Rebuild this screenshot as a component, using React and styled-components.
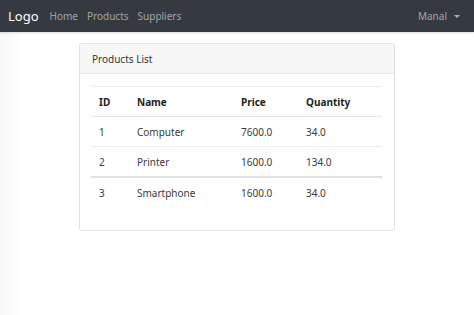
import React from 'react';
import styled, { createGlobalStyle } from 'styled-components';

const GlobalStyle = createGlobalStyle`
  html, body {
    margin: 0;
    padding: 0;
  }
  body {
    font-family: 'Noto Sans', 'Open Sans', sans-serif;
    color: #212529;
    background: linear-gradient(to right, #f7f7f7 0px, #fbfbfb 12px, #ffffff 22px);
    min-height: 315px;
  }
`;

const NavBar = styled.nav`
  height: 32px;
  background: #343a40;
  display: flex;
  align-items: center;
  padding: 0 8px;
  box-shadow: 0 1px 2px rgba(0, 0, 0, 0.15);
`;

const Brand = styled.a`
  color: #fff;
  font-size: 13px;
  margin-right: 11px;
`;

const NavLinks = styled.div`
  display: flex;
  gap: 9px;
  flex: 1;
`;

const NavLink = styled.a`
  color: rgba(255, 255, 255, 0.55);
  font-size: 10px;
`;

const UserMenu = styled.div`
  display: flex;
  align-items: center;
  gap: 7px;
  color: rgba(255, 255, 255, 0.55);
  font-size: 10px;
  margin-right: 6px;
`;

const Caret = styled.span`
  width: 0;
  height: 0;
  border-left: 3px solid transparent;
  border-right: 3px solid transparent;
  border-top: 3px solid rgba(255, 255, 255, 0.6);
`;

const Card = styled.section`
  width: 316px;
  margin: 11px auto 0;
  border: 1px solid #e2e2e2;
  border-radius: 3px;
  box-sizing: border-box;
  background: #fff;
`;

const CardHeader = styled.div`
  height: 30px;
  background: #f7f7f7;
  border-bottom: 1px solid #e6e6e6;
  display: flex;
  align-items: center;
  padding-left: 12px;
  font-size: 10px;
  color: #333;
  box-sizing: border-box;
`;

const CardBody = styled.div`
  padding: 12px 12px 23px 11px;
`;

const Table = styled.table`
  width: 100%;
  border-collapse: collapse;
  table-layout: fixed;
  font-size: 10px;
`;

const HeadCell = styled.th`
  text-align: left;
  font-weight: 700;
  height: 29px;
  padding: 0 0 0 8px;
  border-top: 1px solid #eceeef;
  border-bottom: 1px solid #e3e5e6;
  width: ${(p) => (p.$w ? `${p.$w}px` : 'auto')};
  color: #222;
`;

const Row = styled.tr`
  border-bottom: ${(p) => (p.$thick ? '2px solid #e2e2e2' : '1px solid #eceeef')};
  &:last-child {
    border-bottom: none;
  }
`;

const Cell = styled.td`
  height: 29px;
  padding: 0 0 0 8px;
  color: #3a3a3a;
`;

const products = [
  { id: 1, name: 'Computer', price: '7600.0', quantity: '34.0' },
  { id: 2, name: 'Printer', price: '1600.0', quantity: '134.0' },
  { id: 3, name: 'Smartphone', price: '1600.0', quantity: '34.0' },
];

export default function App() {
  return (
    <>
      <GlobalStyle />
      <NavBar>
        <Brand>Logo</Brand>
        <NavLinks>
          <NavLink>Home</NavLink>
          <NavLink>Products</NavLink>
          <NavLink>Suppliers</NavLink>
        </NavLinks>
        <UserMenu>
          Manal
          <Caret />
        </UserMenu>
      </NavBar>
      <Card>
        <CardHeader>Products List</CardHeader>
        <CardBody>
          <Table>
            <thead>
              <tr>
                <HeadCell $w={30}>ID</HeadCell>
                <HeadCell $w={96}>Name</HeadCell>
                <HeadCell $w={57}>Price</HeadCell>
                <HeadCell>Quantity</HeadCell>
              </tr>
            </thead>
            <tbody>
              {products.map((p, i) => (
                <Row key={p.id} $thick={i === 1}>
                  <Cell>{p.id}</Cell>
                  <Cell>{p.name}</Cell>
                  <Cell>{p.price}</Cell>
                  <Cell>{p.quantity}</Cell>
                </Row>
              ))}
            </tbody>
          </Table>
        </CardBody>
      </Card>
    </>
  );
}
